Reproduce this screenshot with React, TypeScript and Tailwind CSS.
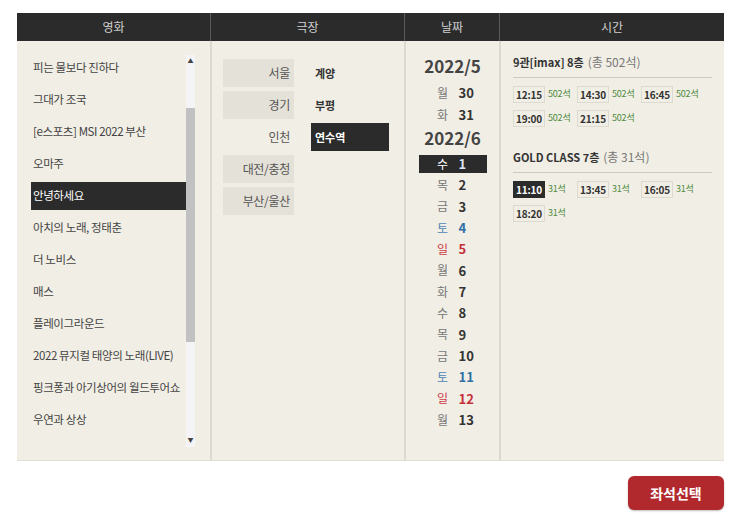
import React from 'react';

// ── Data ──
const MOVIES = [
  '피는 물보다 진하다',
  '그대가 조국',
  '[e스포츠] MSI 2022 부산',
  '오마주',
  '안녕하세요',
  '아치의 노래, 정태춘',
  '더 노비스',
  '매스',
  '플레이그라운드',
  '2022 뮤지컬 태양의 노래(LIVE)',
  '핑크퐁과 아기상어의 월드투어쇼',
  '우연과 상상',
];
const SELECTED_MOVIE = '안녕하세요';

const REGIONS = [
  { name: '서울', boxed: true },
  { name: '경기', boxed: true },
  { name: '인천', boxed: false },
  { name: '대전/충청', boxed: true },
  { name: '부산/울산', boxed: true },
];
const THEATERS = ['계양', '부평', '연수역'];
const SELECTED_THEATER = '연수역';

type Day = { day: string; num: number; kind?: 'sat' | 'sun'; selected?: boolean };

const MAY: Day[] = [
  { day: '월', num: 30 },
  { day: '화', num: 31 },
];
const JUNE: Day[] = [
  { day: '수', num: 1, selected: true },
  { day: '목', num: 2 },
  { day: '금', num: 3 },
  { day: '토', num: 4, kind: 'sat' },
  { day: '일', num: 5, kind: 'sun' },
  { day: '월', num: 6 },
  { day: '화', num: 7 },
  { day: '수', num: 8 },
  { day: '목', num: 9 },
  { day: '금', num: 10 },
  { day: '토', num: 11, kind: 'sat' },
  { day: '일', num: 12, kind: 'sun' },
  { day: '월', num: 13 },
];

const SCREENS = [
  {
    title: '9관[imax] 8층',
    total: '(총 502석)',
    times: [
      { t: '12:15', seats: '502석' },
      { t: '14:30', seats: '502석' },
      { t: '16:45', seats: '502석' },
      { t: '19:00', seats: '502석' },
      { t: '21:15', seats: '502석' },
    ],
  },
  {
    title: 'GOLD CLASS 7층',
    total: '(총 31석)',
    times: [
      { t: '11:10', seats: '31석', selected: true },
      { t: '13:45', seats: '31석' },
      { t: '16:05', seats: '31석' },
      { t: '18:20', seats: '31석' },
    ],
  },
];

function Header({ label, first }: { label: string; first?: boolean }) {
  return (
    <div
      className={`h-[28px] bg-[#2b2b2b] flex items-center justify-center text-[12px] text-[#cfcfcf] ${
        first ? '' : 'border-l border-[#5a5a5a]'
      }`}
    >
      {label}
    </div>
  );
}

function DayRow({ d }: { d: Day }) {
  const dayColor = d.selected
    ? 'text-white'
    : d.kind === 'sat'
    ? 'text-[#4f86b8]'
    : d.kind === 'sun'
    ? 'text-[#cc3b44]'
    : 'text-[#777]';
  const numColor = d.selected
    ? 'text-[#dbe6f6]'
    : d.kind === 'sat'
    ? 'text-[#2f6fa6]'
    : d.kind === 'sun'
    ? 'text-[#c42f3a]'
    : 'text-[#333]';
  return (
    <div className="h-[21.33px] flex items-center justify-center">
      <div
        className={`w-[68px] h-[18px] flex items-center justify-center gap-[8px] ${
          d.selected ? 'bg-[#2b2b2b]' : ''
        }`}
      >
        <span className={`w-[16px] text-center text-[12px] ${dayColor}`}>{d.day}</span>
        <span className={`w-[12px] whitespace-nowrap text-[13px] font-bold ${numColor}`}>{d.num}</span>
      </div>
    </div>
  );
}

export default function App() {
  return (
    <div className="w-[730px] h-[517px] bg-white pt-[13px] pl-[17px] pr-[6px] font-['Noto_Sans_CJK_KR',sans-serif] text-[#333]">
      <div className="flex w-[707px]">

        {/* ── 영화 ── */}
        <div className="w-[193px] flex flex-col">
          <Header label="영화" first />
          <div className="h-[420px] bg-[#f1eee5] border-b border-[#e2dfd6] flex pl-[14px] pt-[13px]">
            <div className="w-[155px] flex flex-col gap-[4px]">
              {MOVIES.map(m => (
                <div
                  key={m}
                  className={`h-[28px] flex items-center pl-[2px] text-[11.5px] tracking-[-0.4px] whitespace-nowrap overflow-hidden ${
                    m === SELECTED_MOVIE ? 'bg-[#2b2b2b] text-white' : 'text-[#444]'
                  }`}
                >
                  {m}
                </div>
              ))}
            </div>
            {/* fake scrollbar */}
            <div className="w-[9px] h-[392px] mt-[1px] bg-[#f4f3f5] flex flex-col items-center">
              <div className="h-[12px] flex items-center text-[6px] text-[#444] leading-none">▲</div>
              <div className="h-[41px]" />
              <div className="w-[9px] h-[234px] bg-[#c1c1c1]" />
              <div className="flex-1" />
              <div className="h-[14px] flex items-center text-[6px] text-[#444] leading-none">▼</div>
            </div>
          </div>
        </div>

        {/* ── 극장 ── */}
        <div className="w-[194px] flex flex-col">
          <Header label="극장" />
          <div className="h-[420px] bg-[#f1eee5] border-l-2 border-b border-[#dcd9d0] border-b-[#e2dfd6] flex pl-[11px] pt-[18px] gap-[17px]">
            <div className="w-[71px] flex flex-col gap-[4px]">
              {REGIONS.map(r => (
                <div
                  key={r.name}
                  className={`h-[28px] flex items-center justify-end pr-[4px] text-[12px] tracking-[-0.3px] text-[#555] ${
                    r.boxed ? 'bg-[#e4e1d8]' : ''
                  }`}
                >
                  {r.name}
                </div>
              ))}
            </div>
            <div className="w-[78px] flex flex-col gap-[4px]">
              {THEATERS.map(t => (
                <div
                  key={t}
                  className={`h-[28px] flex items-center pl-[4px] text-[11px] font-bold ${
                    t === SELECTED_THEATER ? 'bg-[#2b2b2b] text-white' : 'text-[#333]'
                  }`}
                >
                  {t}
                </div>
              ))}
            </div>
          </div>
        </div>

        {/* ── 날짜 ── */}
        <div className="w-[95px] flex flex-col">
          <Header label="날짜" />
          <div className="h-[420px] bg-[#f1eee5] border-l-2 border-b border-[#dcd9d0] border-b-[#e2dfd6] flex flex-col pt-[13px]">
            <div className="h-[24px] flex items-center justify-center text-[17px] font-bold text-[#444]">2022/5</div>
            <div className="h-[4px]" />
            {MAY.map(d => (
              <div key={`5-${d.num}`} className="h-[22px] flex items-center justify-center">
                <div className="w-[68px] flex items-center justify-center gap-[8px]">
                  <span className="w-[16px] text-center text-[12px] text-[#777]">{d.day}</span>
                  <span className="w-[12px] whitespace-nowrap text-[13px] font-bold text-[#333]">{d.num}</span>
                </div>
              </div>
            ))}
            <div className="h-[24px] flex items-center justify-center text-[17px] font-bold text-[#444]">2022/6</div>
            <div className="h-[3px]" />
            {JUNE.map(d => (
              <DayRow key={`6-${d.num}`} d={d} />
            ))}
          </div>
        </div>

        {/* ── 시간 ── */}
        <div className="w-[225px] flex flex-col">
          <Header label="시간" />
          <div className="h-[420px] bg-[#f1eee5] border-l-2 border-b border-[#dcd9d0] border-b-[#e2dfd6] flex flex-col px-[12px] pt-[13px]">
            {SCREENS.map((s, i) => (
              <div key={s.title} className={i > 0 ? 'mt-[22px]' : ''}>
                <div className="h-[24px] pb-[7px] border-b border-[#cdcac1] flex items-center gap-[4px] whitespace-nowrap">
                  <span className="text-[11px] font-bold text-[#333]">{s.title}</span>
                  <span className="text-[12px] text-[#777]">{s.total}</span>
                </div>
                <div className="mt-[8px] grid grid-cols-[64px_64px_64px] gap-y-[7px]">
                  {s.times.map(tm => (
                    <div key={tm.t} className="flex items-center gap-[3px]">
                      <div
                        className={`w-[32px] h-[17px] flex items-center justify-center text-[10px] font-semibold tracking-[-0.2px] border ${
                          tm.selected
                            ? 'bg-[#2b2b2b] border-[#2b2b2b] text-white'
                            : 'border-[#dcd9d0] text-[#333]'
                        }`}
                      >
                        {tm.t}
                      </div>
                      <span className="text-[9px] tracking-[-0.2px] text-[#4b8a3c] -mt-[2px]">{tm.seats}</span>
                    </div>
                  ))}
                </div>
              </div>
            ))}
          </div>
        </div>
      </div>

      {/* ── 좌석선택 ── */}
      <div className="flex justify-end mt-[15px]">
        <button className="w-[96px] h-[34px] rounded-md bg-[#b2292d] text-white text-[14px] font-bold shadow-[0_1px_2px_rgba(0,0,0,.25)]">
          좌석선택
        </button>
      </div>
    </div>
  );
}
